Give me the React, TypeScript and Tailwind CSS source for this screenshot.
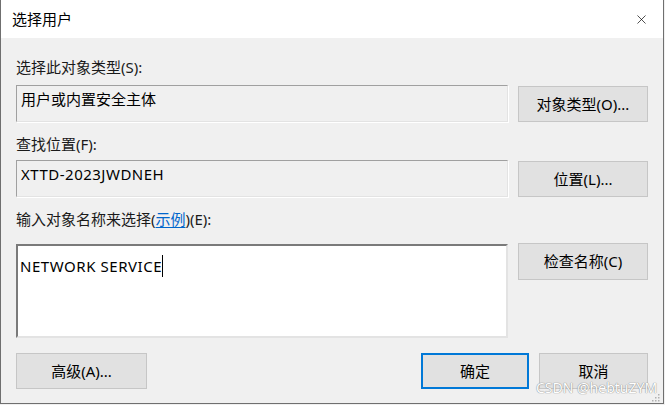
import { X } from 'lucide-react';

const font = { fontFamily: '"Microsoft YaHei UI", "Noto Sans", "Noto Sans CJK SC", sans-serif' };

function Btn({ label, def = false, className = '' }: { label: string; def?: boolean; className?: string }) {
  return (
    <button
      type="button"
      className={`flex h-[36px] items-center justify-center border bg-[#e1e1e1] text-[15px] text-black ${
        def ? 'border-2 border-[#0078d7]' : 'border-[#c6c6c6]'
      } ${className}`}
    >
      {label}
    </button>
  );
}

function ReadBox({ text, latin = false }: { text: string; latin?: boolean }) {
  return (
    <div
      className={`h-[37px] w-[492px] border border-t-[#a0a0a0] border-l-[#a0a0a0] border-r-[#e3e3e3] border-b-[#e3e3e3] bg-[#f0f0f0] px-[4px] pt-[2px] text-[15px] leading-[22px] text-black shadow-[1px_1px_0_#ffffff] ${
        latin ? 'tracking-[0.5px]' : ''
      }`}
    >
      {text}
    </div>
  );
}

export default function App() {
  return (
    <div className="relative h-[405px] w-[665px] overflow-hidden bg-[#f0f0f0]" style={font}>
      <div className="flex h-[404px] w-[664px] flex-col border-x border-b border-[#6f6f6f]">
        {/* title bar */}
        <div className="flex h-[38px] items-center justify-between bg-white pl-[11px] pr-[14px]">
          <span className="text-[15px] text-black">选择用户</span>
          <X className="h-[15px] w-[15px] text-black" strokeWidth={1.1} />
        </div>

        <div className="flex flex-col pl-[15px] pr-[15px]">
          {/* row 1 */}
          <div className="mt-[17px] h-[24px] text-[15px] leading-[24px] text-[#1a1a1a]">选择此对象类型(S):</div>
          <div className="mt-[6px] flex items-start gap-[10px]">
            <ReadBox text="用户或内置安全主体" />
            <Btn label="对象类型(O)..." className="mt-[1px] w-[130px]" />
          </div>

          {/* row 2 */}
          <div className="mt-[10px] h-[24px] text-[15px] leading-[24px] text-[#1a1a1a]">查找位置(F):</div>
          <div className="mt-[4px] flex items-start gap-[10px]">
            <ReadBox text="XTTD-2023JWDNEH" latin />
            <Btn label="位置(L)..." className="mt-[1px] w-[130px]" />
          </div>

          {/* row 3 */}
          <div className="mt-[10px] h-[24px] text-[15px] leading-[24px] text-[#1a1a1a]">
            输入对象名称来选择(<span className="text-[#0066cc] underline underline-offset-2">示例</span>)(E):
          </div>
          <div className="mt-[13px] flex items-start gap-[10px]">
            <div className="h-[94px] w-[492px] border-2 border-t-[#7a7a7a] border-l-[#7a7a7a] border-r-[#e3e3e3] border-b-[#e3e3e3] bg-white px-[2px] pt-[4px] text-[15px] leading-[22px] text-black">
              <span className="tracking-[0.55px]">NETWORK SERVICE</span>
              <span className="inline-block h-[22px] w-[1px] translate-y-[5px] bg-black" />
            </div>
            <Btn label="检查名称(C)" className="mt-[-1px] h-[37px] w-[130px]" />
          </div>

          {/* bottom buttons */}
          <div className="mt-[15px] flex items-center">
            <Btn label="高级(A)..." className="w-[131px]" />
            <div className="flex-1" />
            <Btn label="确定" def className="w-[108px]" />
            <Btn label="取消" className="ml-[10px] w-[109px]" />
          </div>
        </div>
      </div>

      {/* watermark */}
      <div
        className="absolute left-[536px] top-[378px] text-[14px] leading-[20px] text-white"
        style={{ textShadow: '0 0 1px #8a8a8a, 0 0 1px #8a8a8a' }}
      >
        CSDN @hebtuZYM
      </div>

      {/* resize grip */}
      <svg className="absolute left-[651px] top-[393px]" width="10" height="10" viewBox="0 0 10 10">
        <rect x="7" y="1" width="1.5" height="1.5" fill="#b0b0b0" />
        <rect x="4" y="4" width="1.5" height="1.5" fill="#b0b0b0" />
        <rect x="7" y="4" width="1.5" height="1.5" fill="#b0b0b0" />
        <rect x="1" y="7" width="1.5" height="1.5" fill="#b0b0b0" />
        <rect x="4" y="7" width="1.5" height="1.5" fill="#b0b0b0" />
        <rect x="7" y="7" width="1.5" height="1.5" fill="#b0b0b0" />
      </svg>
    </div>
  );
}
